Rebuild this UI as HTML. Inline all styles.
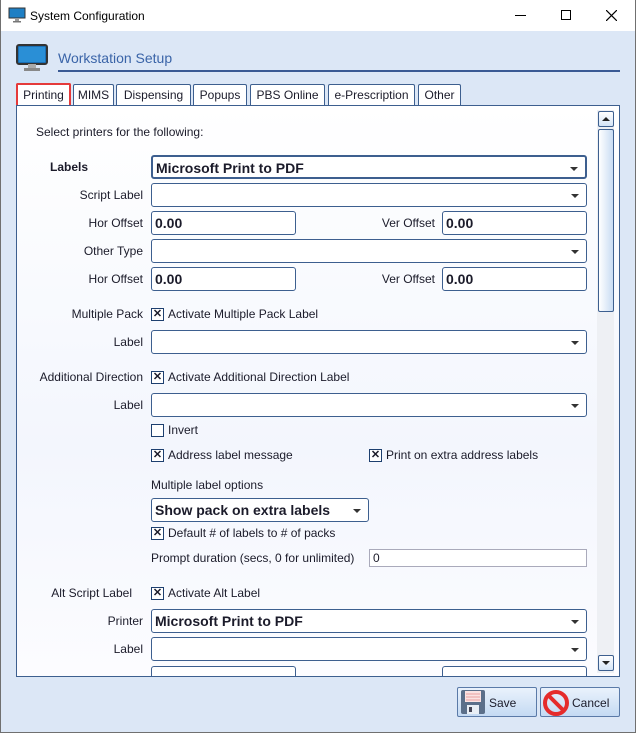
<!DOCTYPE html>
<html><head><meta charset="utf-8"><style>
*{box-sizing:border-box;margin:0;padding:0}
html,body{width:636px;height:733px;overflow:hidden}
body{font-family:"Liberation Sans",sans-serif;font-size:12px;color:#1b1b2a;background:#dce7f6;position:relative}
.a{position:absolute}
.win{position:absolute;left:0;top:0;width:636px;height:733px;border:1px solid #707070;border-top:none}
.tb{position:absolute;left:0;top:0;width:636px;height:31px;background:#fff}
.tab{position:absolute;top:84px;height:21px;border:1px solid #3d5f8f;border-bottom:none;background:#fff;border-radius:2px 2px 0 0;font-size:12px;line-height:21px;text-align:center}
.panel{position:absolute;left:16px;top:105px;width:604px;height:572px;border:1px solid #3d5f8f;background:linear-gradient(#fff,#f3f6fd 60%,#fcfcff);overflow:hidden}
.lbl{position:absolute;text-align:right;width:130px;left:0;line-height:14px}
.cb{position:absolute;height:24px;border:1px solid #3d5f8f;border-radius:3px;background:#fff;font-weight:bold;font-size:14px;line-height:22px;padding-left:3px}
.cb:after{content:"";position:absolute;right:7px;top:10px;border-left:4px solid transparent;border-right:4px solid transparent;border-top:4px solid #333}
.tf{position:absolute;height:24px;border:1px solid #3d5f8f;border-radius:3px;background:#fff;font-weight:bold;font-size:14px;line-height:22px;padding-left:3px}
.chk{position:absolute;width:13px;height:13px;border:1px solid #1d3f6f;background:#fff;font-size:11px;line-height:11px;text-align:center;font-weight:bold}
.t{position:absolute;line-height:14px;white-space:nowrap}
</style></head><body>
<div class="tb">
<svg class="a" style="left:8px;top:7px" width="18" height="16"><rect x="1" y="1" width="16" height="10" fill="#1e7fc4" stroke="#333"/><rect x="7" y="11" width="4" height="3" fill="#999"/><rect x="5" y="14" width="8" height="1.5" fill="#777"/></svg>
<div class="t" style="left:30px;top:9px;font-size:12px;color:#000">System Configuration</div>
<div class="a" style="left:515px;top:15px;width:11px;height:1px;background:#000"></div>
<div class="a" style="left:561px;top:10px;width:10px;height:10px;border:1px solid #000"></div>
<svg class="a" style="left:606px;top:10px" width="11" height="11"><path d="M0 0L11 11M11 0L0 11" stroke="#000" stroke-width="1.2"/></svg>
</div>
<svg class="a" style="left:16px;top:44px" width="32" height="30"><rect x="1" y="1" width="30" height="19" rx="2" fill="#1a6fb5" stroke="#333" stroke-width="2"/><rect x="3" y="3" width="26" height="15" fill="#2a8fd6"/><rect x="12" y="20" width="8" height="4" fill="#aaa"/><rect x="8" y="24" width="16" height="3" fill="#888"/></svg>
<div class="t" style="left:58px;top:51px;font-size:14px;color:#3a64a8">Workstation Setup</div>
<div class="a" style="left:58px;top:70px;width:562px;height:2px;background:#3a5a94"></div>
<div class="tab" style="left:16px;width:55px;border:2px solid #e53a3a;border-bottom:none;height:23px;top:83px">Printing</div>
<div class="tab" style="left:73px;width:41px">MIMS</div>
<div class="tab" style="left:116px;width:75px">Dispensing</div>
<div class="tab" style="left:193px;width:54px">Popups</div>
<div class="tab" style="left:250px;width:75px">PBS Online</div>
<div class="tab" style="left:328px;width:87px">e-Prescription</div>
<div class="tab" style="left:418px;width:43px">Other</div>
<div class="panel">
<div style="position:absolute;left:-17px;top:-106px;width:636px;height:677px">
<div class="t" style="left:36px;top:125px">Select printers for the following:</div>
<div class="lbl" style="left:0;width:88px;top:160px;font-weight:bold">Labels</div>
<div class="cb" style="left:151px;top:155px;width:436px;border-width:2px">Microsoft Print to PDF</div>
<div class="lbl" style="width:143px;top:188px">Script Label</div>
<div class="cb" style="left:151px;top:183px;width:436px"></div>
<div class="lbl" style="width:143px;top:216px">Hor Offset</div>
<div class="tf" style="left:151px;top:211px;width:145px">0.00</div>
<div class="lbl" style="width:435px;top:216px">Ver Offset</div>
<div class="tf" style="left:442px;top:211px;width:145px">0.00</div>
<div class="lbl" style="width:143px;top:244px">Other Type</div>
<div class="cb" style="left:151px;top:239px;width:436px"></div>
<div class="lbl" style="width:143px;top:272px">Hor Offset</div>
<div class="tf" style="left:151px;top:267px;width:145px">0.00</div>
<div class="lbl" style="width:435px;top:272px">Ver Offset</div>
<div class="tf" style="left:442px;top:267px;width:145px">0.00</div>
<div class="lbl" style="width:143px;top:307px">Multiple Pack</div>
<div class="chk" style="left:151px;top:308px">✕</div><div class="t" style="left:168px;top:307px">Activate Multiple Pack Label</div>
<div class="lbl" style="width:143px;top:335px">Label</div>
<div class="cb" style="left:151px;top:330px;width:436px"></div>
<div class="lbl" style="width:143px;top:370px">Additional Direction</div>
<div class="chk" style="left:151px;top:371px">✕</div><div class="t" style="left:168px;top:370px">Activate Additional Direction Label</div>
<div class="lbl" style="width:143px;top:398px">Label</div>
<div class="cb" style="left:151px;top:393px;width:436px"></div>
<div class="chk" style="left:151px;top:424px"></div><div class="t" style="left:168px;top:423px">Invert</div>
<div class="chk" style="left:151px;top:449px">✕</div><div class="t" style="left:168px;top:448px">Address label message</div>
<div class="chk" style="left:369px;top:449px">✕</div><div class="t" style="left:386px;top:448px">Print on extra address labels</div>
<div class="t" style="left:151px;top:478px">Multiple label options</div>
<div class="cb" style="left:151px;top:498px;width:218px">Show pack on extra labels</div>
<div class="chk" style="left:151px;top:527px">✕</div><div class="t" style="left:168px;top:526px">Default # of labels to # of packs</div>
<div class="t" style="left:151px;top:551px">Prompt duration (secs, 0 for unlimited)</div>
<div class="a" style="left:369px;top:549px;width:218px;height:18px;border:1px solid #aab;background:#fff;padding-left:3px;line-height:16px">0</div>
<div class="lbl" style="width:132px;top:586px">Alt Script Label</div>
<div class="chk" style="left:151px;top:587px">✕</div><div class="t" style="left:168px;top:586px">Activate Alt Label</div>
<div class="lbl" style="width:143px;top:614px">Printer</div>
<div class="cb" style="left:151px;top:609px;width:436px">Microsoft Print to PDF</div>
<div class="lbl" style="width:143px;top:642px">Label</div>
<div class="cb" style="left:151px;top:637px;width:436px"></div>
<div class="tf" style="left:151px;top:666px;width:145px;height:11px;border-bottom:none;border-radius:3px 3px 0 0"></div>
<div class="tf" style="left:442px;top:666px;width:145px;height:11px;border-bottom:none;border-radius:3px 3px 0 0"></div>
<div class="a" style="left:597px;top:110px;width:17px;height:563px;background:#eef0f4"></div>
<div class="a" style="left:598px;top:111px;width:16px;height:16px;border:1px solid #3d5f8f;border-radius:2px;background:linear-gradient(#fff,#d4e4f6)"></div>
<div class="a" style="left:602px;top:117px;border-left:4px solid transparent;border-right:4px solid transparent;border-bottom:4px solid #222"></div>
<div class="a" style="left:598px;top:129px;width:16px;height:183px;border:1px solid #3d5f8f;border-radius:2px;background:linear-gradient(90deg,#fff,#c8dcf3)"></div>
<div class="a" style="left:598px;top:655px;width:16px;height:16px;border:1px solid #3d5f8f;border-radius:2px;background:linear-gradient(#fff,#d4e4f6)"></div>
<div class="a" style="left:602px;top:661px;border-left:4px solid transparent;border-right:4px solid transparent;border-top:4px solid #222"></div>
</div></div>
<div class="a" style="left:457px;top:687px;width:80px;height:30px;border:1px solid #5a7aa8;border-radius:2px;background:linear-gradient(#eaf2fc,#c4daf3)"></div>
<svg class="a" style="left:460px;top:689px" width="26" height="26"><rect x="1" y="1" width="24" height="24" rx="2" fill="#5b6f8a"/><rect x="5" y="2" width="16" height="11" fill="#fbe2e2"/><path d="M6 5h14M6 8h14M6 11h14" stroke="#e9a0a0"/><rect x="7" y="16" width="12" height="9" fill="#e8eef5"/><rect x="9" y="18" width="3" height="5" fill="#445"/></svg>
<div class="t" style="left:489px;top:696px">Save</div>
<div class="a" style="left:540px;top:687px;width:80px;height:30px;border:1px solid #5a7aa8;border-radius:2px;background:linear-gradient(#eaf2fc,#c4daf3)"></div>
<svg class="a" style="left:542px;top:689px" width="28" height="28"><circle cx="14" cy="14" r="11" fill="none" stroke="#e52b2b" stroke-width="4"/><path d="M6 6L22 22" stroke="#e52b2b" stroke-width="4"/></svg>
<div class="t" style="left:572px;top:696px">Cancel</div>
<div class="win"></div>
</body></html>
